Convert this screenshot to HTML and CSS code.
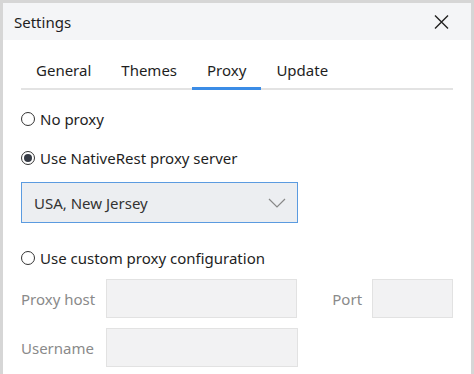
FILE: index.html
```html
<!DOCTYPE html>
<html>
<head>
<meta charset="utf-8">
<link rel="stylesheet" href="styles.css">
</head>
<body>
<div class="window">
  <div class="titlebar">
    <span class="title">Settings</span>
    <svg class="close" width="15" height="14" viewBox="0 0 15 14"><path d="M1 0.5L14 13.5M14 0.5L1 13.5" stroke="#222" stroke-width="1.4" fill="none"/></svg>
  </div>
  <div class="content">
    <div class="tabs">
      <div class="tab">General</div>
      <div class="tab">Themes</div>
      <div class="tab active">Proxy</div>
      <div class="tab">Update</div>
    </div>
    <div class="radio r1"><span class="circle"></span><span>No proxy</span></div>
    <div class="radio r2"><span class="circle checked"></span><span>Use NativeRest proxy server</span></div>
    <div class="select"><span>USA, New Jersey</span>
      <svg width="18" height="10" viewBox="0 0 18 10"><path d="M1 1L9 9L17 1" stroke="#888" stroke-width="1.2" fill="none"/></svg>
    </div>
    <div class="radio r3"><span class="circle"></span><span>Use custom proxy configuration</span></div>
    <div class="fields">
      <div class="row">
        <span class="label">Proxy host</span><div class="input wide"></div>
        <span class="label port">Port</span><div class="input narrow"></div>
      </div>
      <div class="row">
        <span class="label">Username</span><div class="input wide"></div>
      </div>
    </div>
  </div>
</div>
</body>
</html>
```
FILE: styles.css
```css
html, body { margin: 0; padding: 0; }
body {
  background: #d6d6d6;
  width: 474px;
  height: 374px;
  overflow: hidden;
  font-family: "Noto Sans", sans-serif;
  color: #1e1e1e;
}
.window {
  margin: 3px 3px 0 3px;
  height: 371px;
  background: #fff;
}
.titlebar {
  height: 37px;
  background: #f4f5f7;
  display: flex;
  align-items: center;
  justify-content: space-between;
  padding: 0 22px 0 11px;
}
.title { font-size: 15px; }
.close { width: 15px; height: 14px; }
.content { padding: 0 18px 0 18px; }
.tabs {
  display: flex;
  margin-top: 13px;
  border-bottom: 2px solid #e3e3e3;
  height: 35px;
}
.tab {
  font-size: 15px;
  padding: 5px 15px 0 15px;
  position: relative;
  line-height: 24px;
}
.tab.active::after {
  content: "";
  position: absolute;
  left: 0; right: 0; bottom: -2px;
  height: 3px;
  background: #3b8ce6;
}
.radio {
  display: flex;
  align-items: center;
  font-size: 15px;
  height: 24px;
}
.r1 { margin-top: 17px; }
.r2 { margin-top: 15px; }
.r3 { margin-top: 23px; }
.circle {
  width: 12px;
  height: 12px;
  border: 1.5px solid #333;
  border-radius: 50%;
  margin-right: 5px;
  display: flex;
  align-items: center;
  justify-content: center;
}
.circle.checked::after {
  content: "";
  width: 8px; height: 8px;
  border-radius: 50%;
  background: #363b45;
}
.select {
  margin-top: 12px;
  width: 252px;
  height: 39px;
  border: 1px solid #5b9be0;
  background: #eceef1;
  display: flex;
  align-items: center;
  justify-content: space-between;
  padding: 0 11px 0 12px;
  box-sizing: content-box;
  font-size: 15px;
  color: #333;
}
.fields { margin-top: 9px; }
.row { display: flex; align-items: center; margin-bottom: 10px; }
.label { font-size: 15px; color: #8a8a8a; width: 85px; }
.label.port { width: 40px; margin-left: 35px; }
.input {
  height: 37px;
  background: #f2f2f3;
  border: 1px solid #e2e2e2;
}
.wide { width: 190px; }
.narrow { width: 79px; }
```
